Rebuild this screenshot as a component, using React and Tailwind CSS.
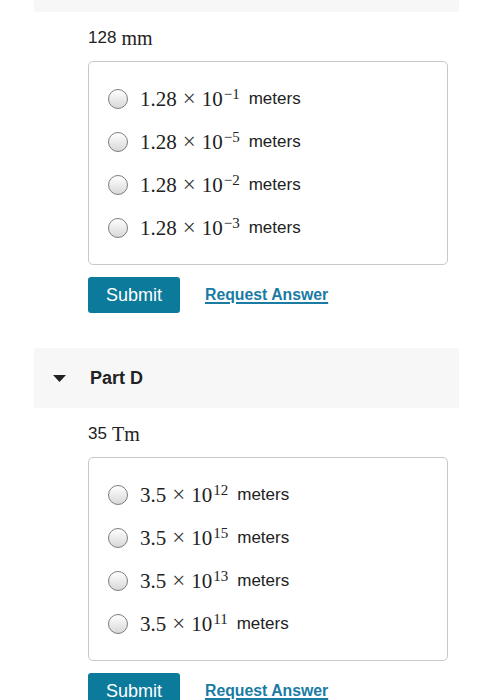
import React from "react";

const parts = [
  {
    title: null,
    given: "128",
    unit: "mm",
    options: [
      { base: "1.28", exp: "−1" },
      { base: "1.28", exp: "−5" },
      { base: "1.28", exp: "−2" },
      { base: "1.28", exp: "−3" },
    ],
  },
  {
    title: "Part D",
    given: "35",
    unit: "Tm",
    options: [
      { base: "3.5", exp: "12" },
      { base: "3.5", exp: "15" },
      { base: "3.5", exp: "13" },
      { base: "3.5", exp: "11" },
    ],
  },
];

function Radio() {
  return (
    <span className="block w-[20px] h-[20px] shrink-0 rounded-full border border-[#7d7d7d] bg-linear-to-b from-white to-[#d8d8d8]" />
  );
}

function Option({ base, exp }) {
  return (
    <label className="flex items-center h-[43px] gap-[12px]">
      <Radio />
      <span className="font-['Liberation_Serif',serif] text-[21px] text-[#222] leading-none">
        {base}
        <span className="mx-[6px] text-[23px] text-[#333]">×</span>
        10
        <sup className="text-[15px] ml-[1px] -top-[0.45em]">{exp}</sup>
      </span>
      <span className="-ml-[3px] text-[17px] text-[#222]">meters</span>
    </label>
  );
}

function Question({ part }) {
  return (
    <div className="pl-[54px] pr-[11px]">
      <div className="h-[24px] flex items-center text-[17px] text-[#222]">
        {part.given}
        <span className="ml-[5px] font-['Liberation_Serif',serif] text-[20px]">{part.unit}</span>
      </div>
      <div className="mt-[11px] border border-[#c8c8c8] rounded-[5px] pl-[19px] py-[15px] bg-white">
        {part.options.map((o, i) => (
          <Option key={i} base={o.base} exp={o.exp} />
        ))}
      </div>
      <div className="flex items-center mt-[12px] gap-[25px]">
        <button className="h-[36px] w-[92px] rounded-[3px] bg-[#0c7a9b] text-white text-[18px]">
          Submit
        </button>
        <a className="text-[15.8px] font-bold text-[#1a7ba4] underline underline-offset-2 decoration-[2px]" href="#">
          Request Answer
        </a>
      </div>
    </div>
  );
}

export default function App() {
  return (
    <div className="min-h-[700px] bg-white font-['Liberation_Sans',Arial,sans-serif]">
      <div className="ml-[34px] w-[425px]">
        <div className="h-[12px] bg-[#f7f7f7]" />
        <div className="mt-[14px]">
          <Question part={parts[0]} />
        </div>

        <div className="mt-[35px] h-[60px] bg-[#f7f7f7] flex items-center">
          <svg width="13" height="7" viewBox="0 0 13 7" className="ml-[19px]">
            <polygon points="0,0 13,0 6.5,7" fill="#222" />
          </svg>
          <span className="ml-[24px] text-[18px] font-bold text-[#222]">Part D</span>
        </div>
        <div className="mt-[14px]">
          <Question part={parts[1]} />
        </div>
      </div>
    </div>
  );
}
